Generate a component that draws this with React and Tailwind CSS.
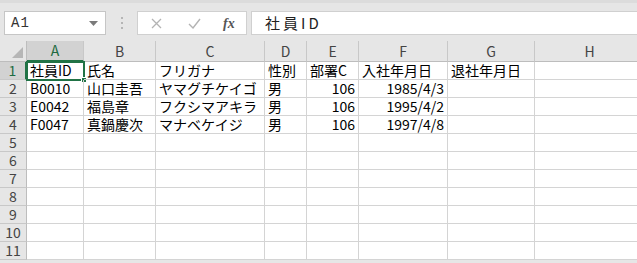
import React from "react";

const cols = ["A", "B", "C", "D", "E", "F", "G", "H"];
const rows = [
  ["社員ID", "氏名", "フリガナ", "性別", "部署C", "入社年月日", "退社年月日", ""],
  ["B0010", "山口圭吾", "ヤマグチケイゴ", "男", "106", "1985/4/3", "", ""],
  ["E0042", "福島章", "フクシマアキラ", "男", "106", "1995/4/2", "", ""],
  ["F0047", "真鍋慶次", "マナベケイジ", "男", "106", "1997/4/8", "", ""],
];
const rightAlign = [false, false, false, false, true, true, false, false];

export default function App() {
  const allRows = Array.from({ length: 11 }, (_, i) => rows[i] || ["", "", "", "", "", "", "", ""]);
  return (
    <div
      className="w-[637px] h-[263px] overflow-hidden bg-[#e6e6e6] text-black"
      style={{ fontFamily: '"Noto Sans CJK JP", "Noto Sans", sans-serif' }}
    >
      {/* toolbar */}
      <div className="h-[41px] border-t-[3px] border-[#dcdcdc] bg-[#e6e6e6] flex items-start pt-[8px]">
        <div className="ml-[4px] w-[102px] h-[24px] bg-white border border-[#c6c6c6] flex items-center justify-between pl-[6px] pr-[7px]">
          <span className="text-[14px] text-[#333] tracking-[1px]" style={{ fontFamily: '"Liberation Mono", monospace' }}>A1</span>
          <svg width="9" height="5" viewBox="0 0 9 5"><path d="M0 0h9L4.5 5z" fill="#7a7a7a" /></svg>
        </div>
        <div className="w-[31px] h-[24px] flex flex-col items-center justify-center gap-[3px]">
          <div className="w-[2px] h-[2px] bg-[#b5b5b5]" />
          <div className="w-[2px] h-[2px] bg-[#b5b5b5]" />
          <div className="w-[2px] h-[2px] bg-[#b5b5b5]" />
        </div>
        <div className="w-[110px] h-[24px] bg-white border border-[#d0d0d0] flex items-center">
          <svg className="ml-[13px]" width="11" height="11" viewBox="0 0 11 11"><path d="M1 1L10 10M10 1L1 10" stroke="#b3b3b3" strokeWidth="1.3" /></svg>
          <svg className="ml-[26px]" width="13" height="11" viewBox="0 0 13 11"><path d="M1 6L5 10L12 1" stroke="#b3b3b3" strokeWidth="1.4" fill="none" /></svg>
          <span className="ml-[22px] text-[14px] italic font-bold text-[#555]" style={{ fontFamily: '"Liberation Serif", serif' }}>fx</span>
        </div>
        <div className="ml-[4px] flex-1 h-[24px] bg-white border border-[#d0d0d0] border-r-0 flex items-center pl-[13px]">
          <span className="text-[15px] text-[#222] tracking-[3px]">社員ID</span>
        </div>
      </div>

      {/* grid */}
      <div className="grid grid-cols-[27px_57px_72px_109px_42px_52px_89px_87px_110px] grid-rows-[21px] auto-rows-[18px] bg-white text-[14px] leading-[17px]">
        {/* header row */}
        <div className="bg-[#e6e6e6] border-r border-b border-[#bdbdbd] relative">
          <svg className="absolute right-[3px] bottom-[3px]" width="11" height="11" viewBox="0 0 11 11"><path d="M11 0V11H0z" fill="#b6b6b6" /></svg>
        </div>
        {cols.map((c, i) => (
          <div
            key={c}
            className={
              "flex items-center justify-center border-r border-[#c8c8c8] " +
              (i === 0
                ? "bg-[#d2d2d2] text-[#1e6b41] border-b-2 border-b-[#217346]"
                : "bg-[#e6e6e6] text-[#444] border-b border-b-[#bdbdbd]")
            }
          >
            {c}
          </div>
        ))}

        {allRows.map((r, ri) => (
          <React.Fragment key={ri}>
            <div
              className={
                "flex items-center justify-center border-b border-[#c8c8c8] " +
                (ri === 0
                  ? "bg-[#d2d2d2] text-[#1e6b41] border-r-2 border-r-[#217346]"
                  : "bg-[#e6e6e6] text-[#444] border-r border-r-[#bdbdbd]")
              }
            >
              {ri + 1}
            </div>
            {r.map((v, ci) => (
              <div
                key={ci}
                className={
                  "relative border-r border-b border-[#d4d4d4] whitespace-nowrap flex items-center px-[3px] " +
                  (rightAlign[ci] && ri > 0 ? "justify-end" : "justify-start")
                }
              >
                {v}
                {ri === 0 && ci === 0 && (
                  <>
                    <div className="absolute left-[-1px] top-[-1px] right-[-2px] bottom-[-2px] border-2 border-[#217346]" />
                    <div className="absolute right-[-4px] bottom-[-4px] w-[6px] h-[6px] bg-[#217346] border border-white" />
                  </>
                )}
              </div>
            ))}
          </React.Fragment>
        ))}
      </div>
    </div>
  );
}
